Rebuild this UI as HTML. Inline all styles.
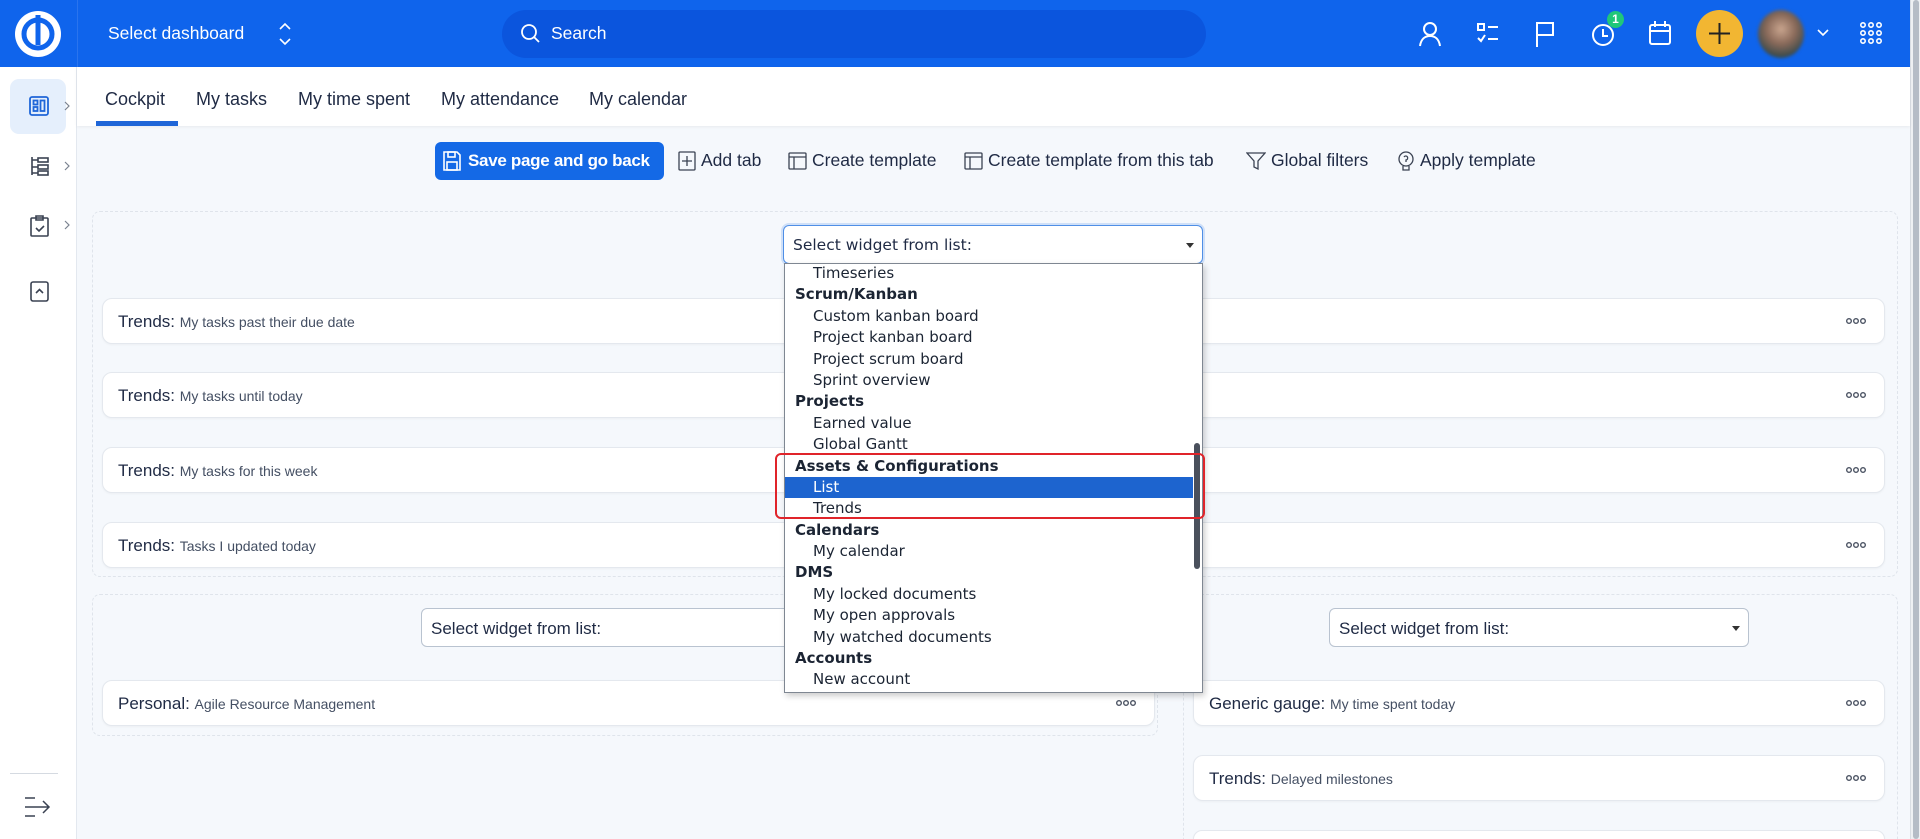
<!DOCTYPE html>
<html style="overflow:hidden;height:839px"><head><meta charset="utf-8"><style>
*{box-sizing:border-box;margin:0;padding:0}
body{width:1920px;height:839px;overflow:hidden;background:#f5f8fc;font-family:"Liberation Sans",sans-serif;color:#1f2a44;position:relative}
.abs{position:absolute}
.hdr{left:0;top:0;width:1910px;height:67px;background:#0f64ec}
.sb{left:1910px;top:0;width:10px;height:839px;background:#eef0f3;border-left:1px solid #d9dde3}
.sb i{position:absolute;left:2px;top:0;width:6px;height:839px;background:#b5bcc6;border-radius:3px}
.side{left:0;top:67px;width:77px;height:772px;background:#fff;border-right:1px solid #e3e8ef}
.tabs{left:77px;top:67px;width:1833px;height:59px;background:#fff;box-shadow:0 1px 3px rgba(0,0,0,.06)}
.tab{position:absolute;top:22px;font-size:18px;color:#1f2a44}
.tb{position:absolute;top:150px;font-size:17.5px;color:#1f2a44;display:flex;align-items:center;gap:5px}
.box{border:1px dashed #dfe4eb;border-radius:8px;background:#f5f8fc}
.card{position:absolute;background:#fff;border:1px solid #e4e8ee;border-radius:10px;height:46px;box-shadow:0 1px 2px rgba(0,0,0,.04)}
.card .t{position:absolute;left:15px;top:13px;font-size:17px;color:#1f2a44;white-space:nowrap}
.card .t span{font-size:14px;color:#444f63}
.card .d{position:absolute;right:20px;top:18px;width:22px;height:8px}
.card .d::before{content:"";position:absolute;left:0;top:0;width:4px;height:4px;border:1.5px solid #555;border-radius:50%;box-shadow:7px 0 0 -0px #fff}
.dots{position:absolute;right:18px;top:18px}
.sel{position:absolute;background:#fff;border:1px solid #b9c3d0;border-radius:6px;font-size:17px;color:#1f2a44;padding:10px 0 0 9px}
.sel .ar{position:absolute;right:8px;top:17px;width:0;height:0;border-left:4px solid transparent;border-right:4px solid transparent;border-top:5px solid #333}
.dd{left:784px;top:263px;width:419px;height:430px;background:#fff;border:1px solid #7f8792;box-shadow:2px 3px 6px rgba(0,0,0,.2);font-family:"DejaVu Sans",sans-serif;font-size:15px;color:#1b2433;overflow:hidden}
.dd div{height:21.4px;line-height:21.4px;padding-left:28px;white-space:nowrap}
.dd div.h{font-weight:bold;padding-left:10px}
.dd div.s{background:#1d64cf;color:#fff;margin-right:9px}
</style></head><body>
<svg width="0" height="0" style="position:absolute"><defs><g id="dt" fill="none" stroke="#4a5262" stroke-width="1.4"><circle cx="3" cy="4" r="2.3"/><circle cx="10" cy="4" r="2.3"/><circle cx="17" cy="4" r="2.3"/></g></defs></svg>
<div class="abs hdr"></div>
<div class="abs sb"><i></i></div>
<svg class="abs" style="left:13px;top:9px" width="50" height="50" viewBox="0 0 50 50"><circle cx="25" cy="25" r="23" fill="#fff"/><circle cx="25" cy="25" r="14" fill="none" stroke="#0f64ec" stroke-width="5"/><rect x="22.5" y="6" width="5" height="30" fill="#0f64ec"/></svg>
<div class="abs" style="left:77px;top:0;width:1px;height:67px;background:#2a74ee"></div>
<div class="abs" style="left:108px;top:23px;font-size:17.5px;color:#fff">Select dashboard</div>
<svg class="abs" style="left:278px;top:21px" width="14" height="26" viewBox="0 0 14 26"><path d="M2 8l5-5 5 5M2 18l5 5 5-5" stroke="#fff" stroke-width="1.6" fill="none"/></svg>
<div class="abs" style="left:502px;top:10px;width:704px;height:48px;border-radius:24px;background:#0b55dd"></div>
<svg class="abs" style="left:520px;top:23px" width="22" height="22" viewBox="0 0 22 22"><circle cx="9" cy="9" r="7" stroke="#fff" stroke-width="1.8" fill="none"/><path d="M14 14l5 5" stroke="#fff" stroke-width="1.8"/></svg>
<div class="abs" style="left:551px;top:23px;font-size:17.5px;color:#fff">Search</div>
<svg class="abs" style="left:1416px;top:20px" width="28" height="28" viewBox="0 0 28 28" fill="none" stroke="#fff" stroke-width="2"><circle cx="14" cy="9" r="6"/><path d="M4 26c1-7 5-10 10-10s9 3 10 10"/></svg>
<svg class="abs" style="left:1475px;top:21px" width="26" height="26" viewBox="0 0 26 26" fill="none" stroke="#fff" stroke-width="2"><rect x="3" y="3" width="6" height="6"/><path d="M13 6h10M3 17l3 3 4-6M13 18h10"/></svg>
<svg class="abs" style="left:1533px;top:20px" width="24" height="28" viewBox="0 0 24 28" fill="none" stroke="#fff" stroke-width="2"><path d="M4 27V3h16v12H4"/></svg>
<svg class="abs" style="left:1590px;top:20px" width="28" height="28" viewBox="0 0 28 28" fill="none" stroke="#fff" stroke-width="2"><circle cx="13" cy="15" r="10"/><path d="M13 9v7h5"/></svg>
<div class="abs" style="left:1607px;top:11px;width:17px;height:17px;border-radius:50%;background:#20c77a;color:#fff;font-size:12px;font-weight:bold;text-align:center;line-height:17px">1</div>
<svg class="abs" style="left:1647px;top:19px" width="26" height="28" viewBox="0 0 26 28" fill="none" stroke="#fff" stroke-width="2"><rect x="3" y="6" width="20" height="19" rx="2"/><path d="M3 12h20M8 2v6M18 2v6"/></svg>
<div class="abs" style="left:1696px;top:10px;width:47px;height:47px;border-radius:50%;background:#f2b632"></div>
<svg class="abs" style="left:1707px;top:21px" width="25" height="25" viewBox="0 0 25 25"><path d="M12.5 2v21M2 12.5h21" stroke="#222" stroke-width="2"/></svg>
<div class="abs" style="left:1758px;top:10px;width:46px;height:48px;border-radius:50%;background:radial-gradient(circle at 50% 40%,#c9a58e 0,#8a6a5a 40%,#3b4a4a 75%,#1a7a70 100%);filter:blur(1.5px)"></div>
<svg class="abs" style="left:1816px;top:28px" width="14" height="10" viewBox="0 0 14 10"><path d="M2 2l5 5 5-5" stroke="#fff" stroke-width="1.6" fill="none"/></svg>
<svg class="abs" style="left:1859px;top:21px" width="24" height="24" viewBox="0 0 24 24" fill="none" stroke="#fff" stroke-width="1.6"><circle cx="4" cy="4" r="2.2"/><circle cx="12" cy="4" r="2.2"/><circle cx="20" cy="4" r="2.2"/><circle cx="4" cy="12" r="2.2"/><circle cx="12" cy="12" r="2.2"/><circle cx="20" cy="12" r="2.2"/><circle cx="4" cy="20" r="2.2"/><circle cx="12" cy="20" r="2.2"/><circle cx="20" cy="20" r="2.2"/></svg>

<div class="abs side"></div>
<div class="abs" style="left:10px;top:79px;width:56px;height:55px;border-radius:9px;background:#e5effc"></div>
<svg class="abs" style="left:29px;top:96px" width="20" height="20" viewBox="0 0 20 20" fill="none" stroke="#1f66d8" stroke-width="1.8"><rect x="1" y="1" width="18" height="18" rx="2"/><rect x="4.5" y="4.5" width="4" height="4"/><rect x="4.5" y="11" width="4" height="4"/><rect x="11.5" y="4.5" width="4" height="10.5"/></svg>
<svg class="abs" style="left:30px;top:156px" width="20" height="20" viewBox="0 0 20 20" fill="none" stroke="#3a4252" stroke-width="1.6"><path d="M2 1v18M2 4h6M2 11h6M2 17h6"/><rect x="8" y="2" width="10" height="4"/><rect x="8" y="9" width="10" height="4"/><rect x="8" y="15" width="10" height="4"/></svg>
<svg class="abs" style="left:30px;top:215px" width="20" height="22" viewBox="0 0 20 22" fill="none" stroke="#3a4252" stroke-width="1.6"><rect x="1" y="3" width="17" height="18" rx="1"/><path d="M6 1h7v4H6zM6 13l3 3 5-5"/></svg>
<svg class="abs" style="left:30px;top:281px" width="20" height="22" viewBox="0 0 20 22" fill="none" stroke="#3a4252" stroke-width="1.6"><rect x="1" y="1" width="17" height="19" rx="2"/><path d="M6 12l3.5-3.5L13 12"/></svg>
<svg class="abs" style="left:63px;top:100px" width="8" height="140" viewBox="0 0 8 140" fill="none" stroke="#7a8290" stroke-width="1.2"><path d="M2 2l4 4-4 4M2 62l4 4-4 4M2 121l4 4-4 4"/></svg>
<div class="abs" style="left:10px;top:773px;width:48px;height:1px;background:#d5dae1"></div>
<svg class="abs" style="left:24px;top:796px" width="28" height="22" viewBox="0 0 28 22" fill="none" stroke="#3a4252" stroke-width="1.5"><path d="M1 2h10M1 11h24M1 20h10M19 5l6 6-6 6"/></svg>

<div class="abs tabs">
<div class="tab" style="left:28px">Cockpit</div>
<div class="tab" style="left:119px">My tasks</div>
<div class="tab" style="left:221px">My time spent</div>
<div class="tab" style="left:364px">My attendance</div>
<div class="tab" style="left:512px">My calendar</div>
<div class="abs" style="left:19px;top:54px;width:82px;height:5px;background:#1f66d8"></div>
</div>

<div class="abs" style="left:435px;top:142px;width:229px;height:38px;border-radius:6px;background:#1469e6"></div>
<svg class="abs" style="left:443px;top:151px" width="18" height="20" viewBox="0 0 18 20" fill="none" stroke="#fff" stroke-width="1.6"><path d="M1 1h13l3 3v15H1z"/><rect x="5" y="1" width="7" height="5"/><rect x="4" y="11" width="10" height="8"/></svg>
<div class="abs" style="left:468px;top:151px;font-size:17px;font-weight:bold;color:#fff;letter-spacing:-.3px">Save page and go back</div>
<div class="tb" style="left:678px"><svg width="18" height="20" viewBox="0 0 18 20" fill="none" stroke="#3a4252" stroke-width="1.3"><rect x="1" y="1" width="16" height="18" rx="1"/><path d="M9 5v10M4 10h10"/></svg>Add tab</div>
<div class="tb" style="left:788px"><svg width="19" height="18" viewBox="0 0 19 18" fill="none" stroke="#3a4252" stroke-width="1.3"><rect x="1" y="1" width="17" height="16" rx="1"/><path d="M1 5h17M6 5v12"/></svg>Create template</div>
<div class="tb" style="left:964px"><svg width="19" height="18" viewBox="0 0 19 18" fill="none" stroke="#3a4252" stroke-width="1.3"><rect x="1" y="1" width="17" height="16" rx="1"/><path d="M1 5h17M6 5v12"/></svg>Create template from this tab</div>
<div class="tb" style="left:1246px"><svg width="20" height="20" viewBox="0 0 20 20" fill="none" stroke="#3a4252" stroke-width="1.3"><path d="M1 2h18l-7 8v8l-4-2v-6z"/></svg>Global filters</div>
<div class="tb" style="left:1397px"><svg width="18" height="20" viewBox="0 0 18 20" fill="none" stroke="#3a4252" stroke-width="1.3"><circle cx="9" cy="8" r="7"/><path d="M6 15v4h6v-4M7 6a2 2 0 1 1 2 3v2"/></svg>Apply template</div>

<div class="abs box" style="left:92px;top:211px;width:1806px;height:366px"></div>
<div class="card" style="left:102px;top:298px;width:1783px"><div class="t">Trends: <span>My tasks past their due date</span></div><svg class="dots" width="20" height="8"><use href="#dt"/></svg></div>
<div class="card" style="left:102px;top:372px;width:1783px"><div class="t">Trends: <span>My tasks until today</span></div><svg class="dots" width="20" height="8"><use href="#dt"/></svg></div>
<div class="card" style="left:102px;top:447px;width:1783px"><div class="t">Trends: <span>My tasks for this week</span></div><svg class="dots" width="20" height="8"><use href="#dt"/></svg></div>
<div class="card" style="left:102px;top:522px;width:1783px"><div class="t">Trends: <span>Tasks I updated today</span></div><svg class="dots" width="20" height="8"><use href="#dt"/></svg></div>

<div class="abs box" style="left:92px;top:594px;width:1066px;height:142px"></div>
<div class="sel" style="left:421px;top:608px;width:420px;height:39px">Select widget from list:<div class="ar"></div></div>
<div class="card" style="left:102px;top:680px;width:1053px"><div class="t">Personal: <span>Agile Resource Management</span></div><svg class="dots" width="20" height="8"><use href="#dt"/></svg></div>

<div class="abs box" style="left:1183px;top:594px;width:715px;height:245px;border-bottom:none;border-radius:8px 8px 0 0"></div>
<div class="sel" style="left:1329px;top:608px;width:420px;height:39px">Select widget from list:<div class="ar"></div></div>
<div class="card" style="left:1193px;top:680px;width:692px"><div class="t">Generic gauge: <span>My time spent today</span></div><svg class="dots" width="20" height="8"><use href="#dt"/></svg></div>
<div class="card" style="left:1193px;top:755px;width:692px"><div class="t">Trends: <span>Delayed milestones</span></div><svg class="dots" width="20" height="8"><use href="#dt"/></svg></div>
<div class="card" style="left:1193px;top:830px;width:692px;height:9px;border-bottom:none;border-radius:10px 10px 0 0"></div>

<div class="sel" style="left:783px;top:225px;width:420px;height:39px;border:1px solid #4f8fe6;box-shadow:0 0 0 2px #cfe0f8;font-family:'DejaVu Sans',sans-serif;font-size:15.5px">Select widget from list:<div class="ar"></div></div>
<div class="abs dd">
<div style="margin-top:-1px">Timeseries</div>
<div class="h">Scrum/Kanban</div>
<div>Custom kanban board</div>
<div>Project kanban board</div>
<div>Project scrum board</div>
<div>Sprint overview</div>
<div class="h">Projects</div>
<div>Earned value</div>
<div>Global Gantt</div>
<div class="h">Assets &amp; Configurations</div>
<div class="s">List</div>
<div>Trends</div>
<div class="h">Calendars</div>
<div>My calendar</div>
<div class="h">DMS</div>
<div>My locked documents</div>
<div>My open approvals</div>
<div>My watched documents</div>
<div class="h">Accounts</div>
<div>New account</div>
</div>
<div class="abs" style="left:1194px;top:443px;width:6px;height:126px;border-radius:3px;background:#4a505c"></div>
<div class="abs" style="left:775px;top:453px;width:430px;height:66px;border:2px solid #e0242a;border-radius:6px"></div>
</body></html>
